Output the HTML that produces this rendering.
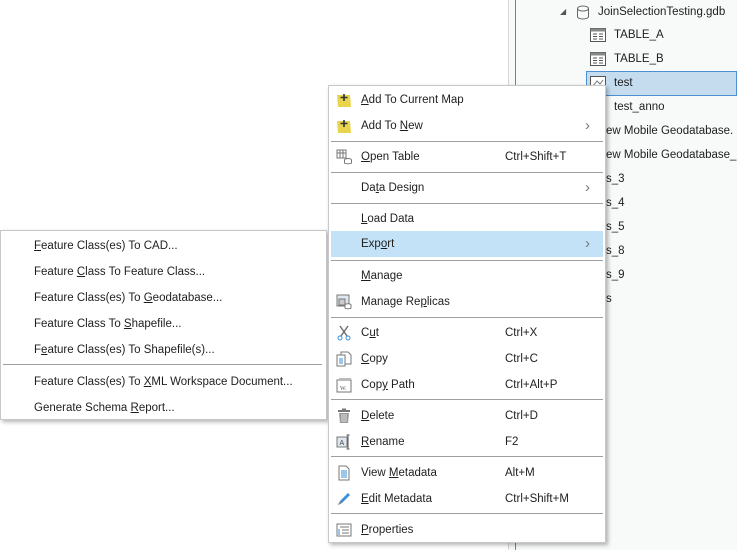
<!DOCTYPE html>
<html><head><style>
*{margin:0;padding:0;box-sizing:border-box}
body{width:737px;height:550px;position:relative;overflow:hidden;background:#fff;font-family:"Segoe UI","Liberation Sans",sans-serif;font-size:11.5px;color:#1e1e1e}
.a{position:absolute;white-space:nowrap}
.panel{position:absolute;left:508px;top:0;width:229px;height:550px;background:#f8f9f9;border-left:1px solid #d6d6d6}
.bl{position:absolute;left:515px;top:0;width:1px;height:550px;background:#5a86b8}
.t{position:absolute;line-height:16px;white-space:nowrap}
.menu{position:absolute;left:328px;top:85px;width:278px;height:458px;background:#fff;border:1px solid #c8c8c8;box-shadow:2px 2px 4px rgba(0,0,0,.3)}
.sub{position:absolute;left:0;top:230px;width:327px;height:190px;background:#fff;border:1px solid #c8c8c8;box-shadow:2px 2px 4px rgba(0,0,0,.3)}
.r{position:absolute;left:0;width:100%;height:26px;line-height:26px;white-space:nowrap}
.r .l{position:absolute;left:32px}
.sub .r .l{left:33px}
.r .k{position:absolute;left:176px}
.r .c{position:absolute;left:256px;color:#777;font-size:15px}
.sep{position:absolute;left:2px;right:2px;height:1px;background:#a0a0a0}
.ic{position:absolute;left:7px;top:5px;width:16px;height:16px}
u{text-decoration:underline}
</style></head><body>
<div class="panel"></div>
<div class="bl"></div>
<div class="a" style="left:560px;top:7px;font-size:8px;color:#555">◢</div>
<svg class="a" style="left:576px;top:5px" width="14" height="15"><ellipse cx="7" cy="3.5" rx="5.5" ry="2.5" fill="none" stroke="#666"/><path d="M1.5 3.5v8c0 1.5 2.5 2.5 5.5 2.5s5.5-1 5.5-2.5v-8" fill="none" stroke="#666"/></svg>
<div class="t" style="left:598px;top:4px">JoinSelectionTesting.gdb</div>
<svg class="a" style="left:590px;top:28px" width="16" height="14"><rect x="0.5" y="0.5" width="15" height="13" fill="#fff" stroke="#555"/><rect x="0.5" y="0.5" width="15" height="3" fill="#888"/><path d="M3 6h4M9 6h4M3 8.5h4M9 8.5h4M3 11h4M9 11h4" stroke="#555"/></svg>
<div class="t" style="left:614px;top:27px">TABLE_A</div>
<svg class="a" style="left:590px;top:52px" width="16" height="14"><rect x="0.5" y="0.5" width="15" height="13" fill="#fff" stroke="#555"/><rect x="0.5" y="0.5" width="15" height="3" fill="#888"/><path d="M3 6h4M9 6h4M3 8.5h4M9 8.5h4M3 11h4M9 11h4" stroke="#555"/></svg>
<div class="t" style="left:614px;top:51px">TABLE_B</div>
<div class="a" style="left:586px;top:71px;width:151px;height:25px;background:#c5dcef;border:1px solid #4d8fd1"></div>
<svg class="a" style="left:590px;top:76px" width="16" height="14"><rect x="0.5" y="0.5" width="15" height="13" fill="#fff" stroke="#555"/><path d="M3 10l4-5 3 3 3-4" fill="none" stroke="#777"/></svg>
<div class="t" style="left:614px;top:75px">test</div>
<div class="t" style="left:614px;top:99px">test_anno</div>
<div class="t" style="left:606px;top:123px">ew Mobile Geodatabase.</div>
<div class="t" style="left:606px;top:147px">ew Mobile Geodatabase_</div>
<div class="t" style="left:606px;top:171px">s_3</div>
<div class="t" style="left:606px;top:195px">s_4</div>
<div class="t" style="left:606px;top:219px">s_5</div>
<div class="t" style="left:606px;top:243px">s_8</div>
<div class="t" style="left:606px;top:267px">s_9</div>
<div class="t" style="left:606px;top:291px">s</div>

<div class="sub">
<div class="r" style="top:2px"><span class="l"><u>F</u>eature Class(es) To CAD...</span></div>
<div class="r" style="top:28px"><span class="l">Feature <u>C</u>lass To Feature Class...</span></div>
<div class="r" style="top:54px"><span class="l">Feature Class(es) To <u>G</u>eodatabase...</span></div>
<div class="r" style="top:80px"><span class="l">Feature Class To <u>S</u>hapefile...</span></div>
<div class="r" style="top:106px"><span class="l">F<u>e</u>ature Class(es) To Shapefile(s)...</span></div>
<div class="sep" style="top:133px;right:4px"></div>
<div class="r" style="top:138px"><span class="l">Feature Class(es) To <u>X</u>ML Workspace Document...</span></div>
<div class="r" style="top:164px"><span class="l">Generate Schema <u>R</u>eport...</span></div>
</div>

<div class="menu">
<div class="r" style="top:1px"><svg class="ic" viewBox="0 0 16 16"><path d="M1 3h13l1 12H2z" fill="#e8d44d"/><path d="M8 2v7M4.5 5.5h7" stroke="#333" stroke-width="1.6"/></svg><span class="l"><u>A</u>dd To Current Map</span></div>
<div class="r" style="top:27px"><svg class="ic" viewBox="0 0 16 16"><path d="M1 3h13l1 12H2z" fill="#e8d44d"/><path d="M8 2v7M4.5 5.5h7" stroke="#333" stroke-width="1.6"/></svg><span class="l">Add To <u>N</u>ew</span><span class="c">›</span></div>
<div class="sep" style="top:55px"></div>
<div class="r" style="top:58px"><svg class="ic" viewBox="0 0 16 16"><rect x="1" y="1" width="9" height="8" fill="#fff" stroke="#777"/><path d="M1 4h9M4 1v8M7 1v8" stroke="#777"/><ellipse cx="12" cy="11" rx="3.5" ry="1.5" fill="#fff" stroke="#777"/><path d="M8.5 11v3c0 1 7 1 7 0v-3" fill="#fff" stroke="#777"/></svg><span class="l"><u>O</u>pen Table</span><span class="k">Ctrl+Shift+T</span></div>
<div class="sep" style="top:86px"></div>
<div class="r" style="top:89px"><span class="l">Da<u>t</u>a Design</span><span class="c">›</span></div>
<div class="sep" style="top:117px"></div>
<div class="r" style="top:120px"><span class="l"><u>L</u>oad Data</span></div>
<div class="r" style="top:145px;left:2px;width:272px;background:#c3e2f7;height:26px"><span class="l" style="left:30px">Exp<u>o</u>rt</span><span class="c" style="left:254px">›</span></div>
<div class="sep" style="top:174px"></div>
<div class="r" style="top:177px"><span class="l"><u>M</u>anage</span></div>
<div class="r" style="top:203px"><svg class="ic" viewBox="0 0 16 16"><rect x="1" y="1" width="12" height="11" fill="#dde8f2" stroke="#777"/><rect x="3" y="5" width="6" height="6" fill="#ccc" stroke="#777"/><ellipse cx="12" cy="11" rx="3" ry="1.3" fill="#fff" stroke="#777"/><path d="M9 11v3c0 1 6 1 6 0v-3" fill="#fff" stroke="#777"/></svg><span class="l">Manage Re<u>p</u>licas</span></div>
<div class="sep" style="top:231px"></div>
<div class="r" style="top:234px"><svg class="ic" viewBox="0 0 16 16"><path d="M4 1l7 10M12 1L5 11" stroke="#666" stroke-width="1.3"/><circle cx="4" cy="13" r="2" fill="none" stroke="#3a8fd6"/><circle cx="12" cy="13" r="2" fill="none" stroke="#3a8fd6"/></svg><span class="l">C<u>u</u>t</span><span class="k">Ctrl+X</span></div>
<div class="r" style="top:260px"><svg class="ic" viewBox="0 0 16 16"><path d="M5 1h7l3 3v9H5z" fill="#fff" stroke="#777"/><path d="M1 4h8v11H1z" fill="#fff" stroke="#777"/><path d="M3 8h4M3 10h4M3 12h4" stroke="#3a8fd6"/></svg><span class="l"><u>C</u>opy</span><span class="k">Ctrl+C</span></div>
<div class="r" style="top:286px"><svg class="ic" viewBox="0 0 16 16"><rect x="1" y="3" width="14" height="12" fill="#fff" stroke="#777"/><rect x="3" y="1" width="12" height="2" fill="#bbb"/><text x="4" y="13" font-size="6" fill="#555" font-family="Liberation Serif">W.</text></svg><span class="l">Cop<u>y</u> Path</span><span class="k">Ctrl+Alt+P</span></div>
<div class="sep" style="top:313px"></div>
<div class="r" style="top:317px"><svg class="ic" viewBox="0 0 16 16"><rect x="2" y="2" width="12" height="2" fill="#777"/><rect x="6" y="0.5" width="4" height="2" fill="#777"/><path d="M3 5h10l-1 10H4z" fill="#999"/><path d="M6 6v8M8 6v8M10 6v8" stroke="#ddd"/></svg><span class="l"><u>D</u>elete</span><span class="k">Ctrl+D</span></div>
<div class="r" style="top:343px"><svg class="ic" viewBox="0 0 16 16"><rect x="1" y="3" width="10" height="10" fill="#dfe8f0" stroke="#777"/><text x="3.5" y="11" font-size="7" fill="#444" font-family="Liberation Sans">A</text><path d="M12 1v14M10.5 1h3M10.5 15h3" stroke="#555"/></svg><span class="l"><u>R</u>ename</span><span class="k">F2</span></div>
<div class="sep" style="top:370px"></div>
<div class="r" style="top:374px"><svg class="ic" viewBox="0 0 16 16"><path d="M3 1h7l3 3v11H3z" fill="#fff" stroke="#777"/><path d="M5 6h6M5 8h6M5 10h6M5 12h6" stroke="#3a8fd6"/></svg><span class="l">View <u>M</u>etadata</span><span class="k">Alt+M</span></div>
<div class="r" style="top:400px"><svg class="ic" viewBox="0 0 16 16"><path d="M2 14l2-4 8-8 2 2-8 8z" fill="#3a8fd6"/><path d="M2 14l2-4 2 2z" fill="#888"/></svg><span class="l"><u>E</u>dit Metadata</span><span class="k">Ctrl+Shift+M</span></div>
<div class="sep" style="top:427px"></div>
<div class="r" style="top:431px"><svg class="ic" viewBox="0 0 16 16"><rect x="1" y="2" width="14" height="12" fill="#fff" stroke="#777"/><path d="M4 5h9M6 8h7M6 11h7" stroke="#777"/><path d="M3 7v6" stroke="#3a8fd6"/></svg><span class="l"><u>P</u>roperties</span></div>
</div>
</body></html>
